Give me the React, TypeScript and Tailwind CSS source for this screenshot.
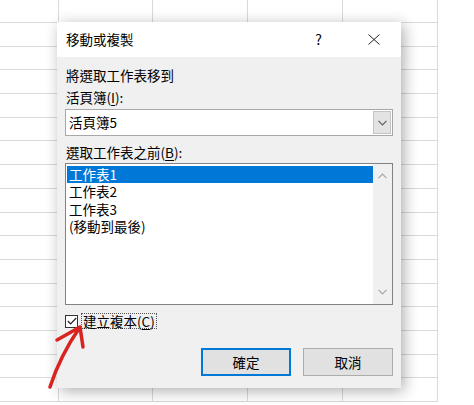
import { ReactNode } from 'react';

const font = { fontFamily: '"Noto Sans CJK TC", "Noto Sans", sans-serif' };

const rowCount = 17;
const colCount = 5;

function SheetGrid() {
  return (
    <div className="flex flex-col">
      {Array.from({ length: rowCount }).map((_, r) => (
        <div key={r} className={`flex ${r === 0 ? 'h-[23px]' : 'h-[23.7px]'}`}>
          {Array.from({ length: colCount }).map((__, c) => (
            <div
              key={c}
              className={`shrink-0 border-b border-r border-[#dadada] ${c === 0 ? 'w-[58.5px]' : 'w-[94.8px]'}`}
            />
          ))}
        </div>
      ))}
    </div>
  );
}

function Label({ children, className = '' }: { children: ReactNode; className?: string }) {
  return <div className={`pl-[1px] text-[13.5px] leading-[18px] text-black ${className}`}>{children}</div>;
}

function Chevron({ up = false, color }: { up?: boolean; color: string }) {
  return (
    <svg width="9" height="6" viewBox="0 0 9 6" className={up ? 'rotate-180' : ''}>
      <path d="M0.5 0.8 L4.5 4.8 L8.5 0.8" fill="none" stroke={color} strokeWidth="1.2" />
    </svg>
  );
}

const sheets = ['工作表1', '工作表2', '工作表3', '(移動到最後)'];

function MoveCopyDialog() {
  return (
    <div
      className="absolute left-[57px] top-[22px] flex h-[366px] w-[344px] flex-col bg-[#f0f0f0] shadow-[3px_3px_14px_rgba(0,0,0,0.32)]"
      style={font}
    >
      {/* title bar */}
      <div className="flex h-[35px] items-center bg-white pl-[9px] text-[13.5px] text-black">
        <span className="flex-1">移動或複製</span>
        <span className="mr-[46px] text-[14px]">?</span>
        <svg width="12" height="11" viewBox="0 0 12 11" className="mr-[21px]">
          <path d="M0.5 0.5 L11.5 10.5 M11.5 0.5 L0.5 10.5" stroke="#222" strokeWidth="1" />
        </svg>
      </div>

      <div className="flex flex-1 flex-col px-[8px] pt-[9px]">
        <Label>將選取工作表移到</Label>
        <Label className="mt-[4px]">
          活頁簿(<span className="underline underline-offset-2">I</span>):
        </Label>

        {/* workbook combobox */}
        <div className="mt-[3px] flex h-[27px] border border-[#a8a8a8] bg-white">
          <div className="flex flex-1 items-center pl-[3px] text-[13.5px] text-black">活頁簿5</div>
          <div className="m-[1px] flex w-[18px] items-center justify-center border border-[#c4c4c4] bg-[#e3e3e3]">
            <Chevron color="#606060" />
          </div>
        </div>

        <Label className="mt-[7px]">
          選取工作表之前(<span className="underline underline-offset-2">B</span>):
        </Label>

        {/* sheet list */}
        <div className="mt-[2px] flex h-[142px] border border-[#828282] bg-white">
          <div className="flex flex-1 flex-col pl-[1px] pt-[2px]">
            {sheets.map((s, i) => (
              <div
                key={s}
                className={`h-[17.4px] pl-[2px] text-[13.5px] leading-[17.4px] ${
                  i === 0 ? 'bg-[#0078d7] text-white' : 'text-black'
                }`}
              >
                {s}
              </div>
            ))}
          </div>
          <div className="flex w-[19px] flex-col items-center justify-between bg-[#f0f0f0] py-[9px]">
            <Chevron up color="#a6a6a6" />
            <Chevron color="#a6a6a6" />
          </div>
        </div>

        {/* copy checkbox */}
        <div className="mt-[8px] flex h-[16px] items-center">
          <div className="flex h-[13px] w-[13px] items-center justify-center border border-[#333] bg-white">
            <svg width="10" height="8" viewBox="0 0 10 8">
              <path d="M0.8 4 L3.6 6.8 L9.2 1" fill="none" stroke="#222" strokeWidth="1.2" />
            </svg>
          </div>
          <div className="ml-[3px] border border-dotted border-[#555] px-[1px] text-[13.5px] leading-[14px] text-black">
            建立複本(<span className="underline underline-offset-2">C</span>)
          </div>
        </div>

        {/* buttons */}
        <div className="mt-[19px] flex justify-end gap-[12px]">
          <button className="h-[28px] w-[90px] border-2 border-[#0078d7] bg-[#e1e1e1] text-[13.5px] text-black">
            確定
          </button>
          <button className="h-[28px] w-[90px] border border-[#adadad] bg-[#e1e1e1] text-[13.5px] text-black">
            取消
          </button>
        </div>
      </div>
    </div>
  );
}

export default function App() {
  return (
    <div className="relative h-[405px] w-[474px] overflow-hidden bg-white">
      <SheetGrid />
      <MoveCopyDialog />
      {/* hand-drawn annotation arrow */}
      <svg className="absolute left-0 top-0" width="474" height="405" viewBox="0 0 474 405">
        <path
          d="M50 387 Q 60 356 80 327 M57 340 L80 327 L83 347"
          fill="none"
          stroke="#d8231f"
          strokeWidth="3.5"
          strokeLinecap="round"
          strokeLinejoin="round"
        />
      </svg>
    </div>
  );
}
